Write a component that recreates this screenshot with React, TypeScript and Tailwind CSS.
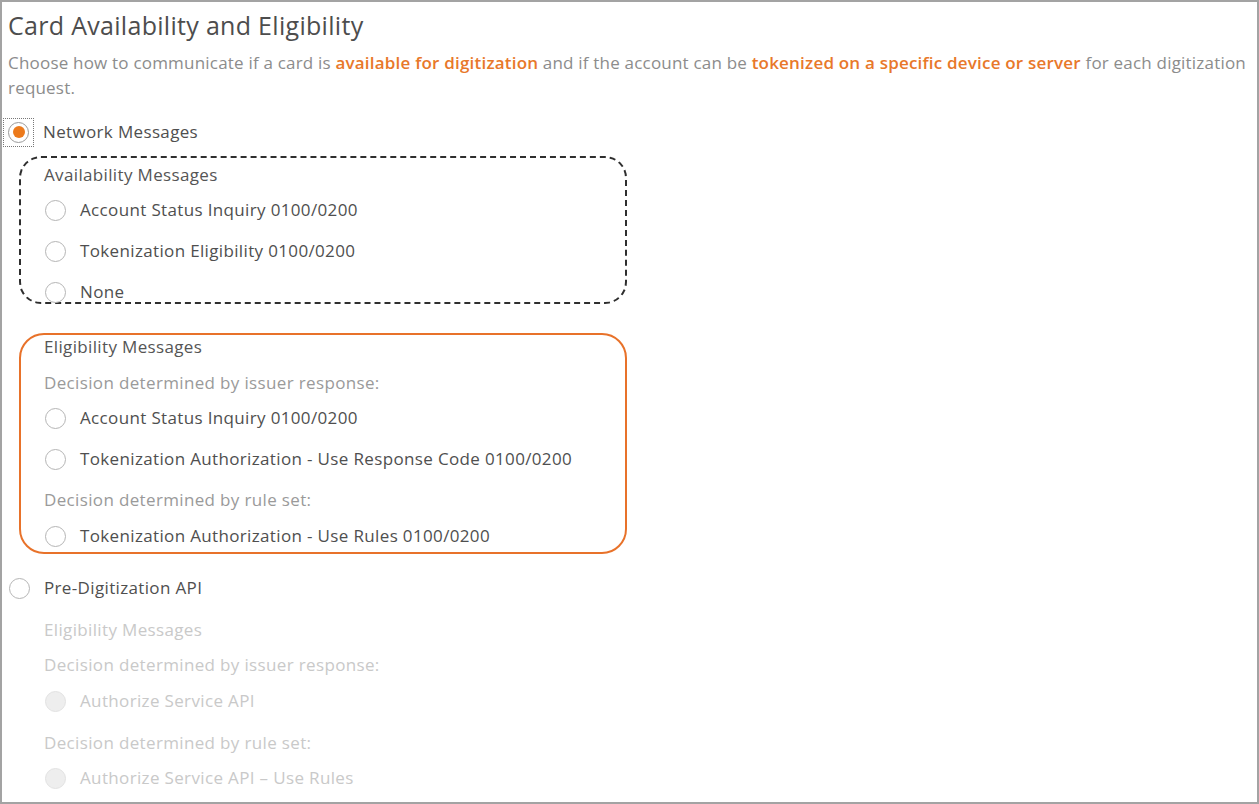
import React from "react";

const font = { fontFamily: "'Open Sans', 'Noto Sans', sans-serif" };

function Radio({ checked = false, disabled = false }: { checked?: boolean; disabled?: boolean }) {
  if (disabled) {
    return <span className="block w-[21px] h-[21px] rounded-full bg-[#eeeeee] border border-[#e2e2e2] shrink-0" />;
  }
  return (
    <span className="flex items-center justify-center w-[21px] h-[21px] rounded-full border border-[#b5b5b5] bg-white shrink-0">
      {checked && <span className="block w-[12px] h-[12px] rounded-full bg-[#ec7a1c]" />}
    </span>
  );
}

function Option({ label, disabled = false, mt }: { label: string; disabled?: boolean; mt: string }) {
  return (
    <div className={`flex items-center h-[24px] ml-[1px] gap-[14px] ${mt}`}>
      <Radio disabled={disabled} />
      <span className={`text-[17px] tracking-[0.35px] leading-[24px] ${disabled ? "text-[#c9c9c9]" : "text-[#4f4f4f]"}`}>
        {label}
      </span>
    </div>
  );
}

function Label({ children, tone, mt }: { children: React.ReactNode; tone: string; mt: string }) {
  return <div className={`h-[24px] leading-[24px] text-[17px] tracking-[0.35px] ${tone} ${mt}`}>{children}</div>;
}

export default function App() {
  return (
    <div style={font} className="w-[1259px] h-[804px] border-2 border-[#a3a3a3] bg-white overflow-hidden">
      <div className="flex flex-col">
        <h1 className="mt-[8px] pl-[6px] h-[30px] leading-[30px] text-[25px] tracking-[0.3px] text-[#4d4d4d] font-normal">
          Card Availability and Eligibility
        </h1>
        <p className="mt-[10px] pl-[6px] pr-[6px] text-[17px] tracking-[0.2px] leading-[25px] text-[#8c8c8c]">
          Choose how to communicate if a card is{" "}
          <span className="font-semibold text-[#e8782a]">available for digitization</span> and if the account can be{" "}
          <span className="font-semibold text-[#e8782a]">tokenized on a specific device or server</span> for each
          digitization request.
        </p>

        <div className="mt-[17px] flex items-center h-[30px]">
          <span className="ml-[1px] flex items-center justify-center w-[31px] h-[29px] border border-dotted border-[#777]">
            <span className="flex items-center justify-center w-[21px] h-[21px] rounded-full border-[1.5px] border-[#9a9a9a] bg-white">
              <span className="block w-[12px] h-[12px] rounded-full bg-[#ec7a1c]" />
            </span>
          </span>
          <span className="ml-[9px] text-[17px] tracking-[0.35px] text-[#4f4f4f]">Network Messages</span>
        </div>

        <div className="mt-[9px] ml-[17px] w-[608px] h-[148px] border-2 border-dashed border-[#2e2e2e] rounded-[22px] pl-[23px] pt-[5px]">
          <Label tone="text-[#555]" mt="">Availability Messages</Label>
          <Option label="Account Status Inquiry 0100/0200" mt="mt-[11px]" />
          <Option label="Tokenization Eligibility 0100/0200" mt="mt-[17px]" />
          <Option label="None" mt="mt-[17px]" />
        </div>

        <div className="mt-[29px] ml-[17px] w-[608px] h-[221px] border-2 border-[#e8722a] rounded-[25px] pl-[23px]">
          <Label tone="text-[#555]" mt="">Eligibility Messages</Label>
          <Label tone="text-[#9a9a9a]" mt="mt-[12px]">Decision determined by issuer response:</Label>
          <Option label="Account Status Inquiry 0100/0200" mt="mt-[11px]" />
          <Option label="Tokenization Authorization - Use Response Code 0100/0200" mt="mt-[17px]" />
          <Label tone="text-[#9a9a9a]" mt="mt-[17px]">Decision determined by rule set:</Label>
          <Option label="Tokenization Authorization - Use Rules 0100/0200" mt="mt-[12px]" />
        </div>

        <div className="mt-[19px] flex items-center h-[30px] pl-[7px]">
          <Radio />
          <span className="ml-[14px] text-[17px] tracking-[0.35px] text-[#4f4f4f]">Pre-Digitization API</span>
        </div>

        <div className="pl-[42px] flex flex-col">
          <Label tone="text-[#c9c9c9]" mt="mt-[15px]">Eligibility Messages</Label>
          <Label tone="text-[#c9c9c9]" mt="mt-[11px]">Decision determined by issuer response:</Label>
          <Option label="Authorize Service API" disabled mt="mt-[12px]" />
          <Label tone="text-[#c9c9c9]" mt="mt-[18px]">Decision determined by rule set:</Label>
          <Option label="Authorize Service API – Use Rules" disabled mt="mt-[11px]" />
        </div>
      </div>
    </div>
  );
}
